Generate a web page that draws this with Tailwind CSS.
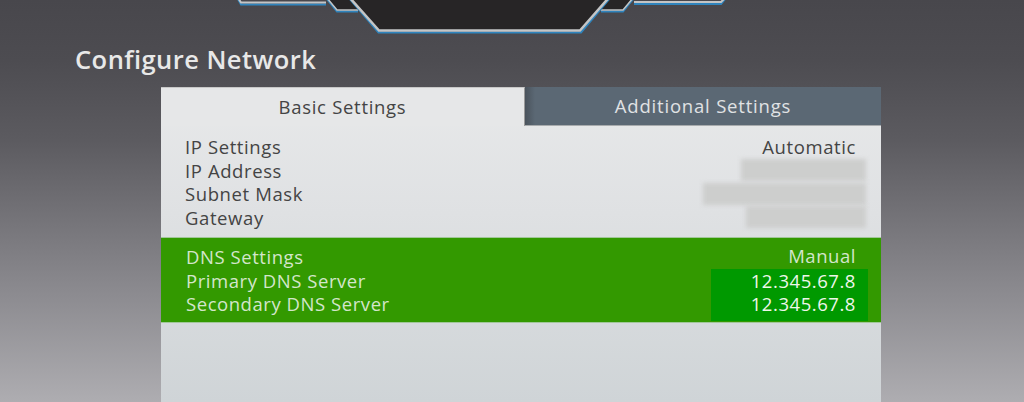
<!DOCTYPE html>
<html>
<head>
<meta charset="utf-8">
<script src="https://cdn.jsdelivr.net/npm/@tailwindcss/browser@4"></script>
</head>
<body class="m-0">
<div class="relative w-[1024px] h-[402px] overflow-hidden bg-[linear-gradient(180deg,#48474c_0%,#4d4c51_15%,#5c5b60_35%,#88878c_70%,#aeadb1_100%)] font-['Open_Sans','Noto_Sans',sans-serif]">
  <svg class="absolute left-0 top-0" width="1024" height="40" viewBox="0 0 1024 40" fill="none">
    <path d="M238 -1 L241 4.500 L326 4.500" stroke="#2f84bd" stroke-width="2"/>
    <path d="M238 -2 L241 2.500 L326 2.500" stroke="#c4c5c6" stroke-width="2"/>
    <path d="M634 4 L721 4 L725 -1" stroke="#2f84bd" stroke-width="2"/>
    <path d="M634 2 L721 2 L725 -2" stroke="#c4c5c6" stroke-width="2"/>
    <path d="M328 -1 L337 10 L360 10 L350 -1 Z" fill="#272526"/>
    <path d="M327 -1 L337 11.500 L358 11.500" stroke="#2f84bd" stroke-width="2"/>
    <path d="M327 -2 L337 10 L358 10" stroke="#c4c5c6" stroke-width="1.500"/>
    <path d="M633 -1 L623 10 L600 10 L610 -1 Z" fill="#272526"/>
    <path d="M633 -1 L623 11.500 L601 11.500" stroke="#2f84bd" stroke-width="2"/>
    <path d="M633 -2 L623 10 L601 10" stroke="#c4c5c6" stroke-width="1.500"/>
    <path d="M350 -2 L379 30 L580 30 L608 -2 Z" fill="#272526"/>
    <path d="M349 -2 L378.500 32.500 L581 32.500 L610 -2" stroke="#2f84bd" stroke-width="2"/>
    <path d="M350 -2 L379 30.500 L580 30.500 L608.500 -2" stroke="#c4c5c6" stroke-width="2.500"/>
  </svg>

  <div class="pt-[42px] pl-[75px] h-[87px]">
    <h1 class="m-0 text-[25.500px] leading-[35px] font-semibold text-[#e8e8e8] tracking-[0.45px]">Configure Network</h1>
  </div>

  <div class="ml-[161px] w-[720px] h-[315px] bg-[linear-gradient(180deg,#e8e9ea_0%,#dfe1e3_40%,#cfd4d7_100%)]">
    <div class="flex h-[39px]">
      <div class="w-[364px] h-[39px] bg-[#e6e7e8] border-t border-t-[#c8c8c8] border-r border-r-[#9a9a9a] flex items-center justify-center text-[18.500px] text-[#444444] tracking-[0.7px]">Basic Settings</div>
      <div class="w-[356px] h-[39px] bg-[linear-gradient(90deg,#4a535c_0px,#5b6874_10px,#5b6874_100%)] flex items-center justify-center text-[18.500px] text-[#e0e2e4] tracking-[0.8px] border-b border-b-[#a8abad]">Additional Settings</div>
    </div>
    <div class="h-[1px] -mt-[1px] w-[364px] bg-[#b9bbbc]"></div>

    <div class="relative flex justify-between h-[111px] pl-[24px] pr-[25px] pt-[9px] text-[18.500px] leading-[23.700px] text-[#444444] tracking-[0.6px]">
      <div>
        <div>IP Settings</div>
        <div>IP Address</div>
        <div>Subnet Mask</div>
        <div>Gateway</div>
      </div>
      <div class="text-right">Automatic</div>
      <div class="absolute right-[15px] top-[33px] w-[125px] h-[22px] bg-[#cdcecd] blur-[2px]"></div>
      <div class="absolute right-[15px] top-[57px] w-[163px] h-[22px] bg-[#cdcecd] blur-[2px]"></div>
      <div class="absolute right-[15px] top-[80px] w-[120px] h-[22px] bg-[#cdcecd] blur-[2px]"></div>
    </div>

    <div class="relative flex justify-between h-[86px] bg-[#339900] border-t border-t-[#a2c79a] border-b border-b-[#a2c79a] pl-[25px] pr-[25px] pt-[7px] text-[18.500px] leading-[23.700px] text-[#d3e6cb] tracking-[0.55px]">
      <div>
        <div>DNS Settings</div>
        <div>Primary DNS Server</div>
        <div>Secondary DNS Server</div>
      </div>
      <div class="text-right flex flex-col items-end">
        <div class="-mt-[1px] h-[24.700px]">Manual</div>
        <div class="-mr-[12px] w-[157px] h-[52px] pr-[12px] bg-[#009900] text-[#eef6ea]">
          <div>12.345.67.8</div>
          <div>12.345.67.8</div>
        </div>
      </div>
    </div>
  </div>
</div>
</body>
</html>
